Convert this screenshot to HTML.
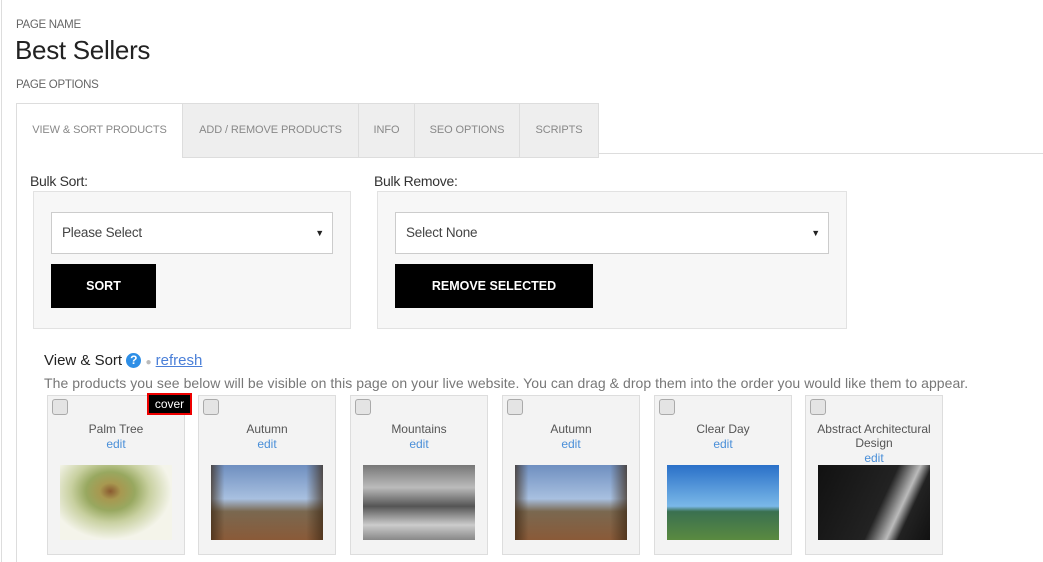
<!DOCTYPE html>
<html><head><style>
*{margin:0;padding:0;box-sizing:border-box}
body{width:1043px;height:562px;overflow:hidden;background:#fff;font-family:"Liberation Sans",sans-serif;position:relative;color:#333}
.a{position:absolute}
.lab{font-size:11.5px;color:#666;letter-spacing:-0.3px}
.tab{position:absolute;top:103px;height:55px;background:#eee;border:1px solid #ddd;font-size:11px;color:#888;line-height:53px;text-align:center;letter-spacing:-0.1px}
.box{position:absolute;background:#f7f7f7;border:1px solid #e2e2e2}
.sel{position:absolute;background:#fff;border:1px solid #ccc;height:42px;font-size:13.5px;color:#444;line-height:40px;padding-left:10px;letter-spacing:-0.2px}
.sel span{position:absolute;right:8px;font-size:9px;color:#222}
.btn{position:absolute;background:#000;color:#fff;font-weight:bold;font-size:12.5px;text-align:center;line-height:44px;height:44px}
.card{position:absolute;top:395px;width:138px;height:160px;background:#f3f3f3;border:1px solid #ddd;text-align:center;font-size:12px;color:#555}
.cb{position:absolute;left:4px;top:3px;width:16px;height:16px;border:1px solid #aaa;border-radius:3px;background:#e4e4e4}
.t{position:absolute;left:0;right:0;top:26px;line-height:14px}
.t .e{display:block;margin-top:1px}
.e{color:#4a8fd8}
.img{position:absolute;left:12px;top:69px;width:112px;height:75px}
</style></head><body>
<div class="a" style="left:1px;top:0;width:1px;height:562px;background:#ddd"></div>
<div class="a" style="left:16px;top:157px;width:1px;height:405px;background:#ddd"></div>
<div class="a lab" style="left:16px;top:19px">PAGE NAME</div>
<div class="a" style="left:15px;top:35px;font-size:26px;color:#222;letter-spacing:-0.3px">Best Sellers</div>
<div class="a lab" style="left:16px;top:79px">PAGE OPTIONS</div>
<div class="a" style="left:598px;top:153px;width:445px;height:1px;background:#ddd"></div>
<div class="a" style="left:16px;top:103px;width:167px;height:55px;border:1px solid #ddd;border-bottom:none;background:#fff;font-size:11px;color:#888;line-height:53px;text-align:center;letter-spacing:-0.1px">VIEW &amp; SORT PRODUCTS</div>
<div class="tab" style="left:182px;width:177px">ADD / REMOVE PRODUCTS</div>
<div class="tab" style="left:358px;width:57px">INFO</div>
<div class="tab" style="left:414px;width:106px">SEO OPTIONS</div>
<div class="tab" style="left:519px;width:80px">SCRIPTS</div>
<div class="a" style="left:30px;top:173px;font-size:14px;color:#333;letter-spacing:-0.3px">Bulk Sort:</div>
<div class="a" style="left:374px;top:173px;font-size:14px;color:#333;letter-spacing:-0.3px">Bulk Remove:</div>
<div class="box" style="left:33px;top:191px;width:318px;height:138px"></div>
<div class="box" style="left:377px;top:191px;width:470px;height:138px"></div>
<div class="sel" style="left:51px;top:212px;width:282px">Please Select<span>▼</span></div>
<div class="sel" style="left:395px;top:212px;width:434px">Select None<span>▼</span></div>
<div class="btn" style="left:51px;top:264px;width:105px">SORT</div>
<div class="btn" style="left:395px;top:264px;width:198px">REMOVE SELECTED</div>
<div class="a" style="left:44px;top:352px;font-size:15px;color:#222">View &amp; Sort <span style="display:inline-block;width:15px;height:15px;border-radius:50%;background:#2d8ee6;color:#fff;font-size:12px;font-weight:bold;text-align:center;line-height:15px;vertical-align:1px">?</span> <span style="color:#bbb;font-size:10px">●</span> <span style="color:#4a7fd8;text-decoration:underline">refresh</span></div>
<div class="a" style="left:44px;top:375px;font-size:14px;color:#777;letter-spacing:0.05px">The products you see below will be visible on this page on your live website. You can drag &amp; drop them into the order you would like them to appear.</div>

<div class="card" style="left:47px"><div class="cb"></div><div class="t">Palm Tree<span class="e">edit</span></div><div class="img" style="background:radial-gradient(ellipse at 45% 35%,#8a5a30 0,#a89850 12%,#98a860 28%,#c8d0a0 45%,#f4f4ea 70%)"></div></div>
<div class="a" style="left:147px;top:393px;width:45px;height:22px;background:#000;border:2px solid #e00;color:#fff;font-size:12px;text-align:center;line-height:18px">cover</div>
<div class="card" style="left:198px"><div class="cb"></div><div class="t">Autumn<span class="e">edit</span></div><div class="img" style="background:linear-gradient(90deg,rgba(60,40,20,.7) 0,transparent 12%,transparent 85%,rgba(60,40,20,.7) 100%),linear-gradient(#6f8fc0 0,#a8c0e0 45%,#7a6850 62%,#8a5a38 100%)"></div></div>
<div class="card" style="left:350px"><div class="cb"></div><div class="t">Mountains<span class="e">edit</span></div><div class="img" style="background:linear-gradient(#777 0,#bbb 30%,#555 55%,#ccc 80%,#888 100%)"></div></div>
<div class="card" style="left:502px"><div class="cb"></div><div class="t">Autumn<span class="e">edit</span></div><div class="img" style="background:linear-gradient(90deg,rgba(60,40,20,.7) 0,transparent 12%,transparent 85%,rgba(60,40,20,.7) 100%),linear-gradient(#6f8fc0 0,#a8c0e0 45%,#7a6850 62%,#8a5a38 100%)"></div></div>
<div class="card" style="left:654px"><div class="cb"></div><div class="t">Clear Day<span class="e">edit</span></div><div class="img" style="background:linear-gradient(#2a70c8 0,#7ab8e8 55%,#3a7050 62%,#5a8a40 100%)"></div></div>
<div class="card" style="left:805px"><div class="cb"></div><div class="t">Abstract Architectural<br>Design<span class="e">edit</span></div><div class="img" style="background:linear-gradient(115deg,#111 0,#222 55%,#bbb 70%,#222 78%,#111 100%)"></div></div>
</body></html>
